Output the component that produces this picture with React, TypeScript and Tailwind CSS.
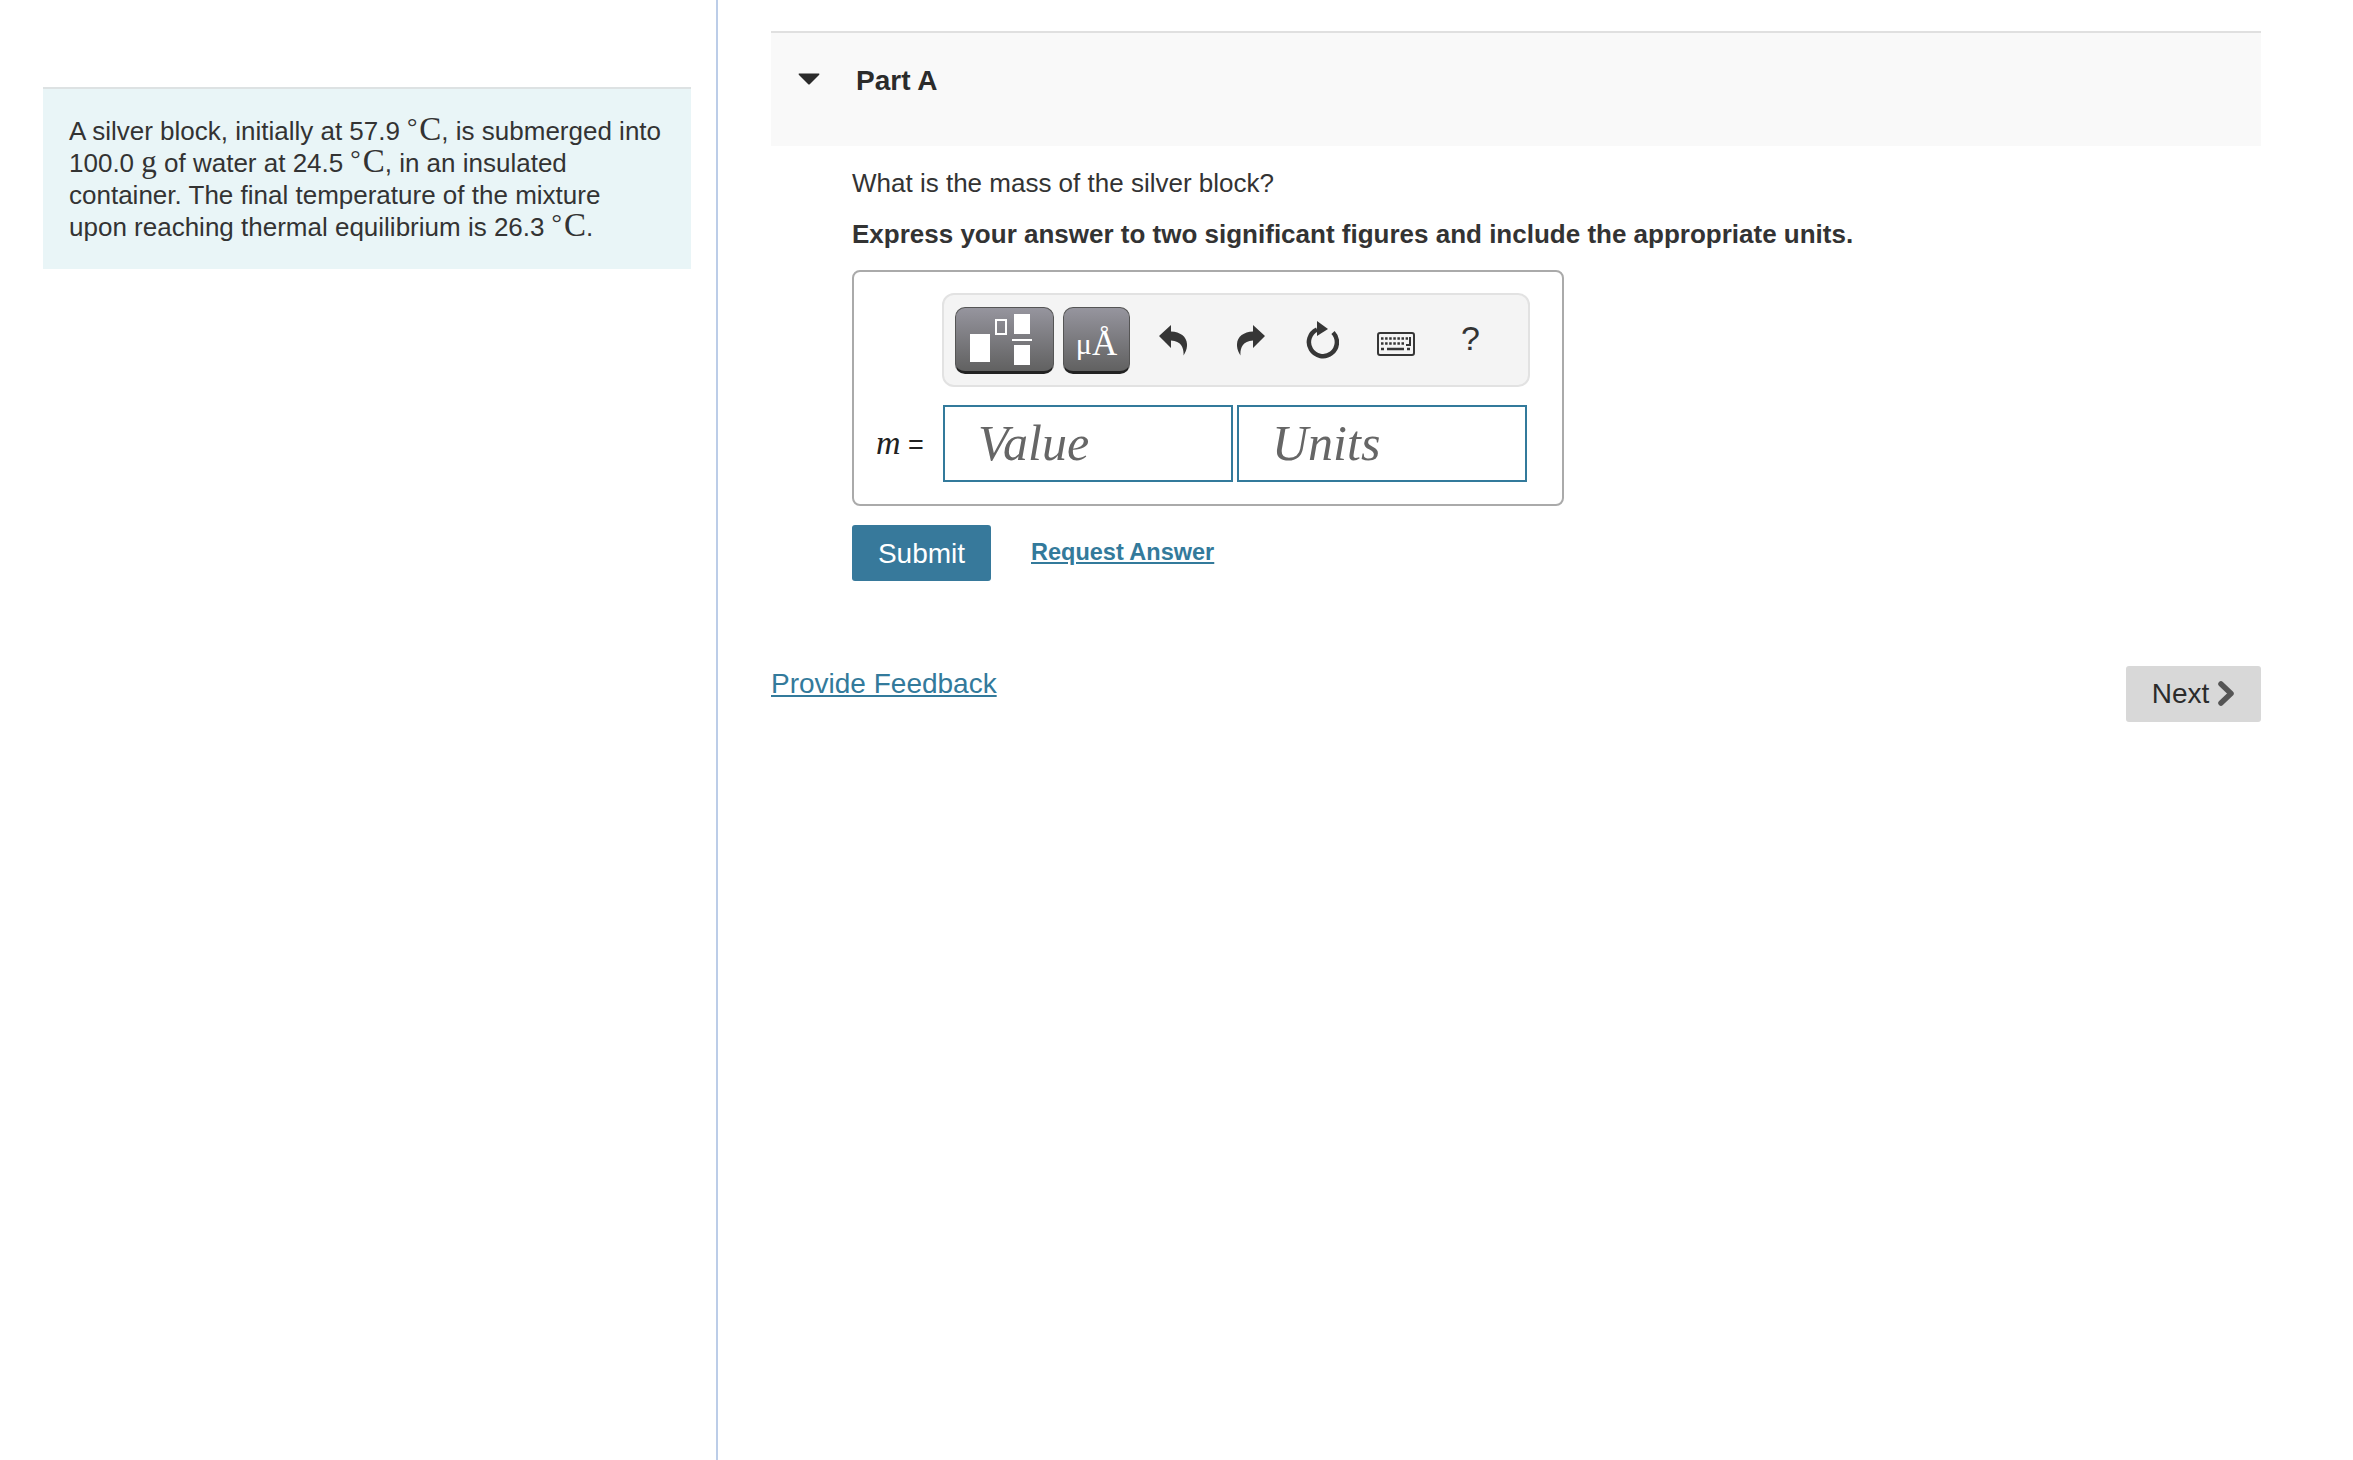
import type { ReactNode } from 'react';

const Deg = ({ value }: { value: string }) => (
  <span>
    {value}
    <span className="font-['Liberation_Serif',serif] relative -top-[5px] ml-[7px] text-[26px] leading-[16px]">°</span>
    <span className="font-['Liberation_Serif',serif] ml-[2px] text-[33px] leading-[16px]">C</span>
  </span>
);

const ToolButton = ({ className, children }: { className: string; children: ReactNode }) => (
  <div
    className={`h-[67px] rounded-[10px] border border-[#555] border-b-[3px] border-b-[#222] bg-gradient-to-b from-[#96959e] to-[#616161] ${className}`}
  >
    {children}
  </div>
);

const TemplateIcon = () => (
  <svg width="98" height="65" viewBox="0 0 98 65" fill="none">
    <rect x="14" y="26" width="20" height="28" fill="#fff" />
    <rect x="40" y="12" width="10" height="14" stroke="#fff" strokeWidth="2" />
    <rect x="58" y="6" width="16" height="20" fill="#fff" />
    <rect x="56" y="31" width="20" height="2" fill="#fff" />
    <rect x="58" y="37" width="16" height="20" fill="#fff" />
  </svg>
);

const UndoIcon = ({ flip }: { flip?: boolean }) => (
  <svg width="28" height="31" viewBox="0 0 28 31" className={flip ? '-scale-x-100' : ''}>
    <path
      d="M0 11 L12 0 V6.5 C22 7 28.5 12 28 21 C27.8 25 26 28 24.5 30.5 C25 24 23 16 12 15.5 V23 Z"
      fill="#363636"
    />
  </svg>
);

const ResetIcon = () => (
  <svg width="34" height="38" viewBox="0 0 34 38" fill="none">
    <path d="M12 8.5 A14 14 0 1 0 28 11.5" stroke="#363636" strokeWidth="4.5" />
    <path d="M12 0 L23 8 L12 15 Z" fill="#363636" />
  </svg>
);

const KeyboardIcon = () => (
  <svg width="38" height="24" viewBox="0 0 38 24" fill="none">
    <rect x="1" y="1" width="36" height="22" rx="2" stroke="#363636" strokeWidth="2" />
    <path d="M4 6.5H31" stroke="#363636" strokeWidth="2.5" strokeDasharray="2.5 1.6" />
    <path d="M4 11.5H27" stroke="#363636" strokeWidth="2.5" strokeDasharray="2.5 1.6" />
    <path d="M33 5V13H29" stroke="#363636" strokeWidth="2" />
    <path d="M4 17H7M10 17H27M30 17H33" stroke="#363636" strokeWidth="2.5" />
  </svg>
);

const App = () => {
  return (
    <div className="flex min-h-[1460px] bg-white font-['Liberation_Sans',sans-serif] text-[#333]">
      <div className="w-[718px] shrink-0 border-r-2 border-[#bccde8] pl-[43px] pr-[25px] pt-[87px]">
        <div className="border-t-2 border-[#dde2e3] bg-[#e9f5f7] pb-[26px] pl-[26px] pr-[20px] pt-[26px] text-[26px] leading-[32px]">
          A silver block, initially at <Deg value="57.9" />, is submerged into
          <br />
          100.0 <span className="font-['Liberation_Serif',serif] text-[31px] leading-[16px]">g</span> of water at{' '}
          <Deg value="24.5" />, in an insulated
          <br />
          container. The final temperature of the mixture
          <br />
          upon reaching thermal equilibrium is <Deg value="26.3" />.
        </div>
      </div>

      <div className="min-w-0 flex-1 pl-[53px] pr-[92px] pt-[31px]">
        <div className="flex h-[115px] items-start border-t-2 border-[#e0e0e0] bg-[#f9f9f9] pl-[27px] pt-[30px]">
          <svg width="22" height="12" viewBox="0 0 22 12" className="mt-[10px]">
            <path d="M1 0.5 H21 Q22 0.5 21 2 L12 11 Q11 12 10 11 L1 2 Q0 0.5 1 0.5 Z" fill="#2b2b2b" />
          </svg>
          <h2 className="ml-[36px] text-[28px] font-bold leading-[36px] text-[#2b2b2b]">Part A</h2>
        </div>

        <div className="ml-[81px] pt-[20px]">
          <p className="text-[26px] leading-[34px]">What is the mass of the silver block?</p>
          <p className="mt-[17px] text-[26px] font-bold leading-[34px]">
            Express your answer to two significant figures and include the appropriate units.
          </p>

          <div className="mt-[19px] h-[236px] w-[712px] rounded-[8px] border-2 border-[#aaa] pl-[88px] pt-[21px]">
            <div className="flex h-[94px] w-[588px] items-center rounded-[12px] border-2 border-[#e2e2e2] bg-[#f4f4f4] pl-[11px]">
              <ToolButton className="w-[99px]">
                <TemplateIcon />
              </ToolButton>
              <ToolButton className="ml-[9px] flex w-[67px] items-start justify-center whitespace-nowrap pt-[8px] font-['Liberation_Serif',serif] text-[35px] leading-[56px] text-white">
                <span className="text-[30px]">μ</span>Å
              </ToolButton>
              <div className="ml-[29px]">
                <UndoIcon />
              </div>
              <div className="ml-[50px]">
                <UndoIcon flip />
              </div>
              <div className="ml-[40px]">
                <ResetIcon />
              </div>
              <div className="ml-[38px] mt-[8px]">
                <KeyboardIcon />
              </div>
              <div className="ml-[46px] -mt-[4px] text-[34px] leading-none">?</div>
            </div>

            <div className="mt-[18px] -ml-[66px] flex items-center">
              <span className="-mt-[2px] w-[66px] whitespace-nowrap pl-0 text-[27px] leading-none text-[#222]">
                <span className="font-['Liberation_Serif',serif] text-[34px] italic">m</span> =
              </span>
              <div className="ml-[1px] flex h-[77px] w-[290px] items-center border-2 border-[#337a9b] pl-[33px] font-['Liberation_Serif',serif] text-[50px] italic text-[#666]">
                Value
              </div>
              <div className="ml-[4px] flex h-[77px] w-[290px] items-center border-2 border-[#337a9b] pl-[33px] font-['Liberation_Serif',serif] text-[50px] italic text-[#666]">
                Units
              </div>
            </div>
          </div>

          <div className="mt-[19px] flex items-center">
            <button className="h-[56px] w-[139px] rounded-[3px] bg-[#37799b] pt-[1px] text-[28px] text-white">
              Submit
            </button>
            <a href="#" className="ml-[40px] -mt-[1px] text-[23.5px] font-bold text-[#337a9b] underline">
              Request Answer
            </a>
          </div>
        </div>

        <div className="mt-[86px] flex items-start justify-between">
          <a href="#" className="text-[28px] leading-[34px] text-[#337a9b] underline">
            Provide Feedback
          </a>
          <button className="-mt-[1px] flex h-[56px] w-[135px] items-center justify-center rounded-[3px] bg-[#d8d8d8] text-[28px] text-[#2b2b2b]">
            Next
            <svg width="18" height="26" viewBox="0 0 18 26" fill="none" className="ml-[8px]">
              <path d="M4 3 L14 12.5 L4 22" stroke="#555" strokeWidth="5.5" strokeLinecap="round" strokeLinejoin="round" />
            </svg>
          </button>
        </div>
      </div>
    </div>
  );
};

export default App;
